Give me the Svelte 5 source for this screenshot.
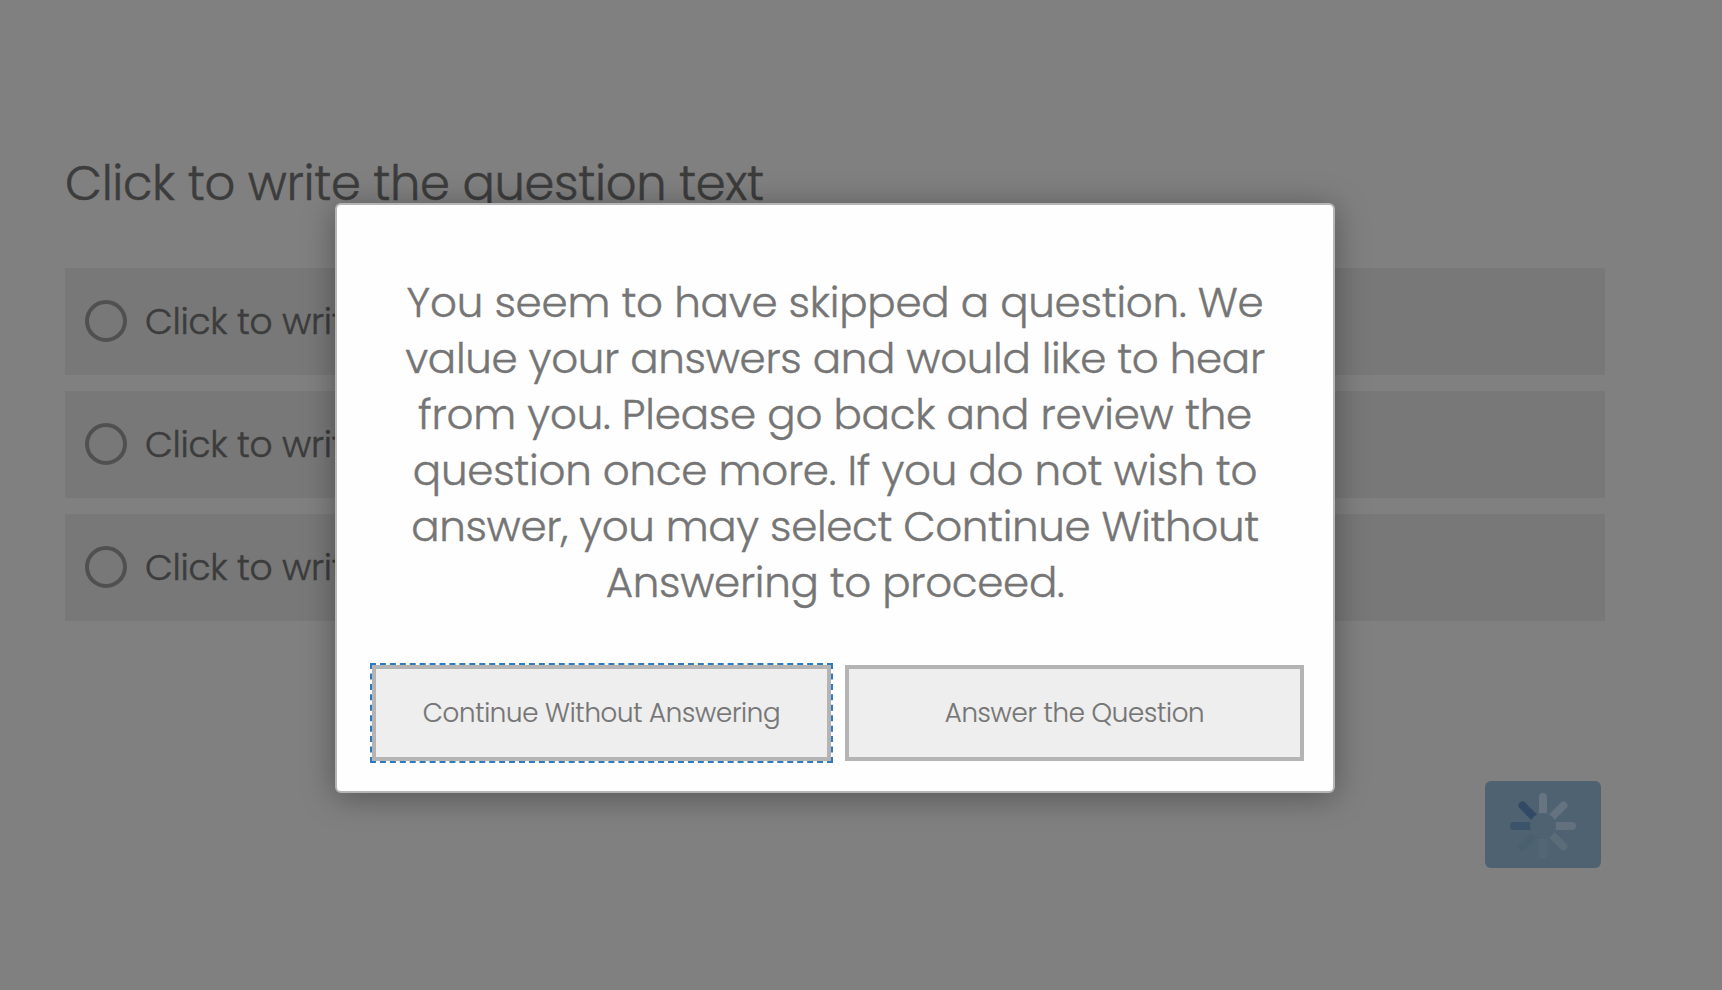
<script>
  const choices = [1, 2, 3].map((id) => ({ id, label: 'Click to write' }));

  // message lines with their tracking in px
  const lines = [
    { text: 'You seem to have skipped a question. We', tracking: -0.22 },
    { text: 'value your answers and would like to hear', tracking: -0.3 },
    { text: 'from you. Please go back and review the', tracking: -0.2 },
    { text: 'question once more. If you do not wish to', tracking: -0.24 },
    { text: 'answer, you may select Continue Without', tracking: -0.34 },
    { text: 'Answering to proceed.', tracking: -0.3 },
  ];

  const spokes = ['#677582', '#657380', '#62717d', '#5b6c79', '#536673', '#4a6070', '#3b5469', '#324a65'];
</script>

<svelte:head>
  <title>Survey</title>
</svelte:head>

<main class="survey">
  <h1>Click to write the question text</h1>
  <div class="choices">
    {#each choices as choice (choice.id)}
      <div class="choice">
        <span class="radio"></span>
        <span class="label">{choice.label}</span>
      </div>
    {/each}
  </div>
  <div class="nav">
    <button class="next" aria-label="Next">
      <svg viewBox="-33 -33 66 66" width="66" height="66">
        {#each spokes as color, i}
          <path d="M-4 -12V-29a4 4 0 0 1 8 0V-12z" fill={color} transform="rotate({i * 45})" />
        {/each}
        <circle r="13" fill="#4f6272" />
      </svg>
    </button>
  </div>
</main>

<div class="overlay">
  <div class="dialog" role="dialog" aria-modal="true">
    <p>
      {#each lines as line}
        <span class="line" style="letter-spacing: {line.tracking}px">{line.text}</span>
      {/each}
    </p>
    <div class="actions">
      <button class="action focused">Continue Without Answering</button>
      <button class="action">Answer the Question</button>
    </div>
  </div>
</div>

<style>
  :global(body) { background: #808080; overflow: hidden; }
  .survey, .overlay { font-family: Poppins, Inter, sans-serif; font-weight: 300; box-sizing: border-box; }
  .survey { width: 1722px; height: 990px; padding: 148px 117px 0 65px; color: #3c3c3c; -webkit-text-stroke: 0.5px #3c3c3c; }

  h1 { margin: 0 0 48px; font-size: 48px; font-weight: 300; line-height: 72px; letter-spacing: -0.33px; white-space: nowrap; }
  .choices { display: flex; flex-direction: column; gap: 16px; }
  .choice { display: flex; align-items: center; gap: 18px; height: 107px; padding: 0 0 1px 20px; box-sizing: border-box; background: #787878; }
  .radio { width: 42px; height: 42px; box-sizing: border-box; border: 4px solid #505050; border-radius: 50%; }
  .label { width: 190px; padding-top: 2px; overflow: hidden; white-space: nowrap; font-size: 36px; line-height: 54px; letter-spacing: -0.25px; }

  .nav { display: flex; justify-content: flex-end; padding: 160px 4px 0 0; }
  .next { display: flex; align-items: center; justify-content: center; width: 116px; height: 87px; padding: 3px 0 0; border: 0; border-radius: 6px; background: #4f6272; }

  .overlay { position: absolute; inset: 0; display: flex; justify-content: center; align-items: flex-start; padding: 203px 52px 0 0; }
  .dialog { width: 1000px; height: 590px; box-sizing: border-box; padding: 70px 29px 0 35px; border: 2px solid #b5b5b5; border-radius: 6px; background: #fefefe; box-shadow: 0 4px 32px rgba(0, 0, 0, 0.35); color: #757575; -webkit-text-stroke: 0.4px #757575; }
  p { margin: 0 6px 54px 0; font-size: 42px; line-height: 56px; text-align: center; }
  .line { display: block; white-space: nowrap; }

  .actions { display: flex; gap: 14px; }
  .action { width: 459px; height: 96px; box-sizing: border-box; padding: 0; border: 4px solid #b4b4b4; background: #eee; color: #757575; font: inherit; font-size: 26px; letter-spacing: -0.25px; -webkit-text-stroke: 0.2px #757575; }
  .focused { outline: 2px dashed #2f7abf; }
</style>
